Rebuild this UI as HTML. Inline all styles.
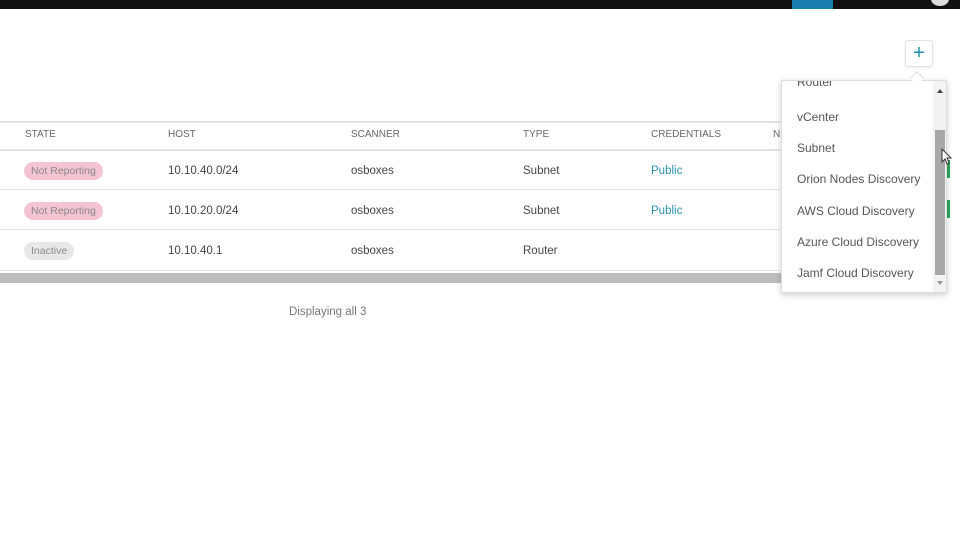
<!DOCTYPE html>
<html><head><meta charset="utf-8"><style>
*{margin:0;padding:0;box-sizing:border-box}
body{width:960px;height:540px;background:#fff;font-family:"Liberation Sans",sans-serif;color:#444;position:relative;overflow:hidden}
.abs{position:absolute}
.top{left:0;top:0;width:960px;height:9px;background:#111}
.hdr{font-size:10px;color:#666;top:129px}
.cell{font-size:11.5px;color:#444}
.pill{font-size:10.5px;border-radius:10px;padding:3px 7px;color:#888}
.pk{background:#f4c4d2}
.gr{background:#e8e8e8}
.line{left:0;width:780px;height:1px;background:#e2e2e2}
.menu{left:781px;top:80px;width:166px;height:213px;background:#fff;border:1px solid #ddd;box-shadow:0 2px 6px rgba(0,0,0,.2);overflow:hidden}
.mi{position:absolute;left:15px;font-size:12px;color:#555}
</style></head><body>
<div class="abs top"></div>
<div class="abs" style="left:792px;top:0;width:41px;height:9px;background:#1a7fae"></div>
<div class="abs" style="left:931px;top:-8px;width:18px;height:14px;border-radius:50%;background:#ddd"></div>

<div class="abs" style="left:905px;top:40px;width:28px;height:27px;border:1px solid #e3e3e3;border-radius:3px;background:#fff;box-shadow:0 1px 2px rgba(0,0,0,.08);color:#1a8caa;font-size:20px;text-align:center;line-height:25px">+</div>

<div class="abs line" style="top:121px;height:2px"></div>
<div class="abs hdr" style="left:25px">STATE</div>
<div class="abs hdr" style="left:168px">HOST</div>
<div class="abs hdr" style="left:351px">SCANNER</div>
<div class="abs hdr" style="left:523px">TYPE</div>
<div class="abs hdr" style="left:651px">CREDENTIALS</div>
<div class="abs hdr" style="left:773px">N</div>
<div class="abs line" style="top:149px;height:2px"></div>

<div class="abs pill pk" style="left:24px;top:162px">Not Reporting</div>
<div class="abs cell" style="left:168px;top:165px">10.10.40.0/24</div>
<div class="abs cell" style="left:351px;top:165px">osboxes</div>
<div class="abs cell" style="left:523px;top:165px">Subnet</div>
<div class="abs cell" style="left:651px;top:165px;color:#2a8fb0">Public</div>
<div class="abs line" style="top:189px"></div>

<div class="abs pill pk" style="left:24px;top:202px">Not Reporting</div>
<div class="abs cell" style="left:168px;top:205px">10.10.20.0/24</div>
<div class="abs cell" style="left:351px;top:205px">osboxes</div>
<div class="abs cell" style="left:523px;top:205px">Subnet</div>
<div class="abs cell" style="left:651px;top:205px;color:#2a8fb0">Public</div>
<div class="abs line" style="top:229px"></div>

<div class="abs pill gr" style="left:24px;top:242px">Inactive</div>
<div class="abs cell" style="left:168px;top:245px">10.10.40.1</div>
<div class="abs cell" style="left:351px;top:245px">osboxes</div>
<div class="abs cell" style="left:523px;top:245px">Router</div>
<div class="abs line" style="top:270px"></div>
<div class="abs" style="left:0;top:273px;width:790px;height:10px;background:#bdbdbd"></div>

<div class="abs" style="left:947px;top:160px;width:3px;height:18px;background:#2eaa5c"></div>
<div class="abs" style="left:947px;top:200px;width:3px;height:18px;background:#2eaa5c"></div>

<div class="abs cell" style="left:289px;top:306px;color:#777">Displaying all 3</div>

<div class="abs" style="left:912px;top:73px;width:10px;height:10px;background:#fff;border-left:1px solid #ddd;border-top:1px solid #ddd;transform:rotate(45deg);z-index:2"></div>
<div class="abs menu">
 <div class="mi" style="top:-6px">Router</div>
 <div class="mi" style="top:29px">vCenter</div>
 <div class="mi" style="top:60px">Subnet</div>
 <div class="mi" style="top:91px">Orion Nodes Discovery</div>
 <div class="mi" style="top:123px">AWS Cloud Discovery</div>
 <div class="mi" style="top:154px">Azure Cloud Discovery</div>
 <div class="mi" style="top:185px">Jamf Cloud Discovery</div>
 <div class="abs" style="left:151px;top:0;width:14px;height:213px;background:#f3f3f3"></div>
 <div class="abs" style="left:153px;top:49px;width:10px;height:145px;background:#a8a8a8"></div>
 <div class="abs" style="left:155px;top:8px;width:0;height:0;border-left:3px solid transparent;border-right:3px solid transparent;border-bottom:4px solid #444"></div>
 <div class="abs" style="left:155px;top:200px;width:0;height:0;border-left:3px solid transparent;border-right:3px solid transparent;border-top:4px solid #999"></div>
</div>
<svg class="abs" style="left:941px;top:148px" width="12" height="18" viewBox="0 0 12 18"><path d="M1 1 L1 14 L4 11 L6 16 L8 15 L6 10 L10 10 Z" fill="#fff" stroke="#333" stroke-width="1"/></svg>
</body></html>
